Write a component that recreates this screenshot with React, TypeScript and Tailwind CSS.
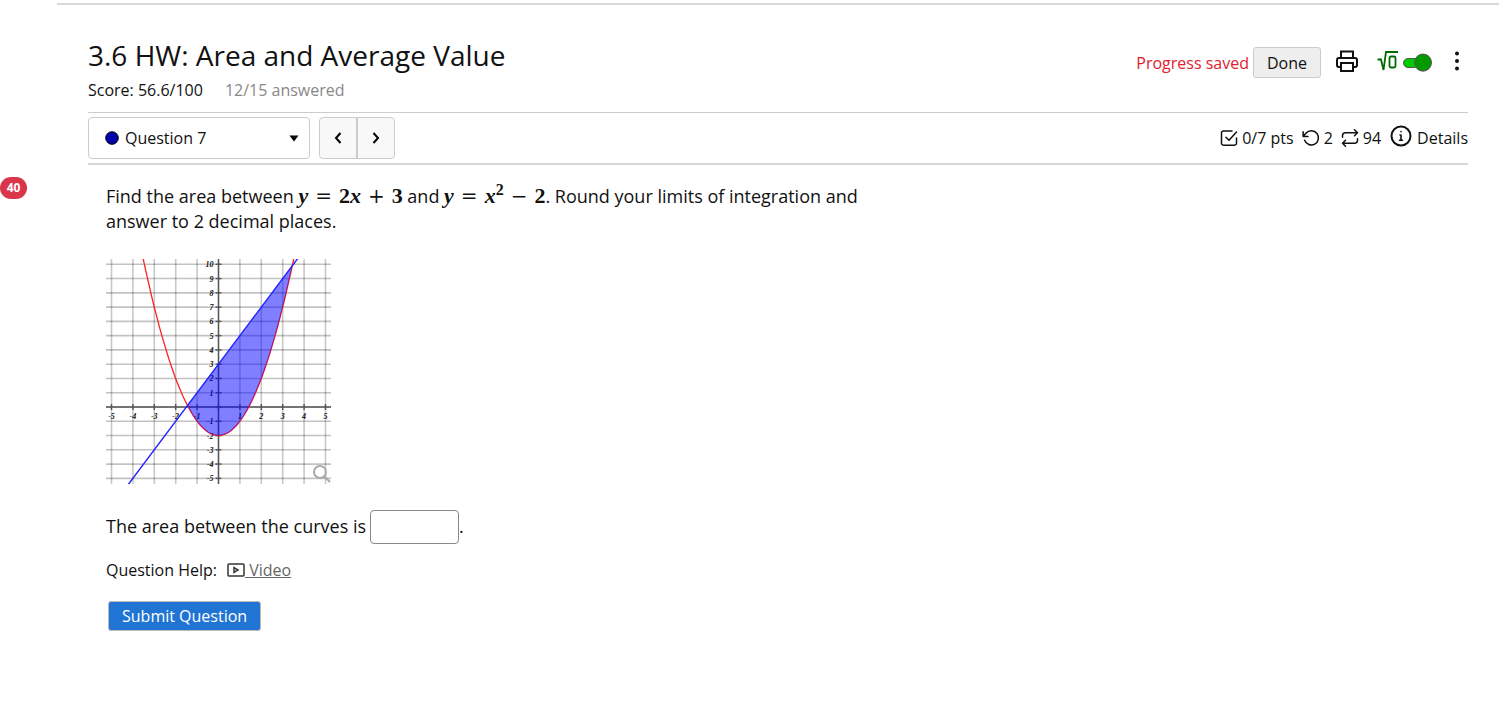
import { useState } from "react";
import type { ReactNode } from "react";

const WIDTH = 225;
const ORIGIN_X = 112.5;
const ORIGIN_Y = 148;
const UNIT_X = 21.4;
const UNIT_Y = 14.27;

const toX = (x: number) => ORIGIN_X + x * UNIT_X;
const toY = (y: number) => ORIGIN_Y - y * UNIT_Y;
const parabola = (x: number) => x * x - 2;

const range = (from: number, to: number) =>
  Array.from({ length: to - from + 1 }, (_, i) => from + i);

const curve = (from: number, to: number) => {
  const steps = 60;
  return Array.from({ length: steps + 1 }, (_, i) => {
    const x = from + ((to - from) * i) / steps;
    return `${toX(x).toFixed(1)},${toY(parabola(x)).toFixed(1)}`;
  }).join(" ");
};

// x values where 2x + 3 = x^2 - 2
const LEFT = 1 - Math.sqrt(6);
const RIGHT = 1 + Math.sqrt(6);

const Graph = () => (
  <svg width={WIDTH} height={WIDTH} viewBox="0 0 225 225" role="img" aria-label="Region between a line and a parabola" className="block overflow-hidden">
    {range(-5, 5).map((x) => (
      <line key={`v${x}`} x1={toX(x)} x2={toX(x)} y1="0" y2={WIDTH} stroke="#000" strokeOpacity="0.22" strokeWidth="1.6" />
    ))}
    {range(-5, 10).map((y) => (
      <line key={`h${y}`} x1="0" x2={WIDTH} y1={toY(y)} y2={toY(y)} stroke="#000" strokeOpacity="0.24" strokeWidth="1.6" />
    ))}
    <g stroke="#555" strokeWidth="1.4">
      <line x1="0" x2={WIDTH} y1={ORIGIN_Y} y2={ORIGIN_Y} />
      <line x1={ORIGIN_X} x2={ORIGIN_X} y1="0" y2={WIDTH} />
      {range(-5, 5).map((x) => (
        <line key={x} x1={toX(x)} x2={toX(x)} y1={ORIGIN_Y - 3} y2={ORIGIN_Y + 3} />
      ))}
      {range(-5, 10).map((y) => (
        <line key={y} x1={ORIGIN_X - 3} x2={ORIGIN_X + 3} y1={toY(y)} y2={toY(y)} />
      ))}
    </g>
    <g className="font-['Liberation_Serif',serif] text-[8px] font-bold italic" fill="#111">
      {range(-5, 5).filter((x) => x !== 0).map((x) => (
        <text key={x} x={toX(x)} y={ORIGIN_Y + 12} textAnchor="middle">{x}</text>
      ))}
      {range(-5, 10).filter((y) => y !== 0).map((y) => (
        <text key={y} x={ORIGIN_X - 5} y={toY(y) + 3} textAnchor="end">{y}</text>
      ))}
    </g>
    <polyline points={curve(-3.6, 3.6)} fill="none" stroke="#ff2020" strokeWidth="1.3" />
    <polygon points={curve(LEFT, RIGHT)} fill="#0000ff" fillOpacity="0.5" />
    <line x1={toX(-4.3)} y1={toY(-5.6)} x2={toX(3.8)} y2={toY(10.6)} stroke="#2020ff" strokeWidth="1.4" />
    <g stroke="#aaa" strokeWidth="2" fill="none">
      <circle cx="214" cy="213" r="6" />
      <path d="M218.500 217.500L224 223" />
    </g>
  </svg>
);

const Icon = ({ size, children }: { size: number; children: ReactNode }) => (
  <svg width={size} height={size} viewBox="0 0 24 24" fill="none" stroke="currentColor" strokeWidth="2" strokeLinecap="round" strokeLinejoin="round" aria-hidden="true" className="shrink-0">
    {children}
  </svg>
);

const MathText = ({ children }: { children: ReactNode }) => (
  <span className="whitespace-nowrap font-['Liberation_Serif',serif] text-[22px] leading-none font-bold">{children}</span>
);

const Op = ({ children }: { children: string }) => (
  <span className="mx-[7px] font-['DejaVu_Serif',serif] text-xl leading-none font-normal">{children}</span>
);

const Header = () => {
  const [mathInput, setMathInput] = useState(true);

  return (
    <header className="flex items-start justify-between border-b border-[#ccc] pt-[31px] pb-[10px]">
      <div>
        <h1 className="text-[28px] leading-[38px]">3.6 HW: Area and Average Value</h1>
        <p className="mt-1 flex gap-[22px] text-base leading-6">
          <span>Score: 56.6/100</span>
          <span className="text-[#888]">12/15 answered</span>
        </p>
      </div>
      <div className="mt-[11px] flex items-center">
        <span className="text-base text-[#e02030]">Progress saved</span>
        <button type="button" className="ml-1 h-[31px] rounded-[3px] border border-[#ccc] bg-[#eee] px-[13px] text-base leading-none">Done</button>
        <button type="button" aria-label="Print" className="ml-[14px] -mt-1">
          <Icon size={24}>
            <path strokeLinejoin="miter" d="M6 9V2.500h12V9M6 18H4a2 2 0 0 1-2-2v-5a2 2 0 0 1 2-2h16a2 2 0 0 1 2 2v5a2 2 0 0 1-2 2h-2M6 14h12v8H6z" />
          </Icon>
        </button>
        <label className="ml-[18px] flex items-center gap-1">
          <svg width="22" height="22" viewBox="0 0 22 22" fill="none" stroke="#006b00" strokeWidth="1.8" aria-hidden="true" className="-mt-1">
            <path d="M0.500 9.500h3.500L6.500 20 9 2H21" />
            <rect x="12.500" y="6.500" width="6" height="11" rx="1.500" />
          </svg>
          <input
            type="checkbox"
            role="switch"
            aria-label="Equation editor"
            checked={mathInput}
            onChange={() => setMathInput(!mathInput)}
            className="sr-only"
          />
          <svg width="30" height="20" viewBox="0 0 30 20" aria-hidden="true">
            <rect x="0.500" y="5.500" width="22" height="9" rx="4.500" fill="#00cc00" stroke="#555" />
            <circle cx={mathInput ? 20 : 9} cy="10.500" r="8.500" fill="#bbb" />
            <circle cx={mathInput ? 20 : 9} cy="9.500" r="8.500" fill="#009900" stroke="#555" />
          </svg>
        </label>
        <button type="button" aria-label="More options" className="mr-[3px] ml-4 -mt-1">
          <svg width="16" height="22" viewBox="0 0 16 22" fill="currentColor" aria-hidden="true">
            <circle cx="8" cy="3.500" r="2" />
            <circle cx="8" cy="11" r="2" />
            <circle cx="8" cy="18.500" r="2" />
          </svg>
        </button>
      </div>
    </header>
  );
};

const QuestionBar = () => (
  <div className="flex items-center justify-between border-b-2 border-[#d6d6d6] py-1">
    <div className="flex gap-[9px]">
      <div className="flex h-[42px] w-[222px] items-center rounded-[4px] border border-[#ccc] pr-[10px] pl-4">
        <svg width="14" height="14" viewBox="0 0 14 14" aria-hidden="true" className="shrink-0">
          <circle cx="7" cy="7" r="6.300" fill="#0000a8" stroke="#000" />
        </svg>
        <select aria-label="Question" className="h-full min-w-0 flex-1 appearance-none bg-transparent pl-[6px] text-base">
          <option>Question 7</option>
        </select>
        <svg width="10" height="7" viewBox="0 0 10 7" aria-hidden="true" className="pointer-events-none shrink-0">
          <path d="M0.500 0.500h9L5 6.500z" fill="#000" />
        </svg>
      </div>
      <div className="flex h-[42px] w-[76px] divide-x-2 divide-[#ccc] overflow-hidden rounded-[4px] border border-[#ccc] bg-[#f8f8f8]">
        <button type="button" aria-label="Previous question" className="flex flex-1 items-center justify-center">
          <svg width="8" height="12" viewBox="0 0 8 12" fill="none" stroke="#000" strokeWidth="2" aria-hidden="true">
            <path d="M6.500 1L2 6l4.500 5" />
          </svg>
        </button>
        <button type="button" aria-label="Next question" className="flex flex-1 items-center justify-center">
          <svg width="8" height="12" viewBox="0 0 8 12" fill="none" stroke="#000" strokeWidth="2" aria-hidden="true">
            <path d="M1.500 1L6 6l-4.500 5" />
          </svg>
        </button>
      </div>
    </div>
    <div className="flex items-center gap-2 text-base leading-6">
      <span className="flex items-center gap-1">
        <Icon size={18}>
          <path d="M8 11l4 4L22 4M22 12v7a2.500 2.500 0 0 1-2.500 2.500h-15A2.500 2.500 0 0 1 2 19V5a2.500 2.500 0 0 1 2.500-2.500H16" />
        </Icon>
        0/7 pts
      </span>
      <span className="flex items-center gap-1">
        <Icon size={18}>
          <path d="M1.500 3.500v6.500h6.500M3.500 15a9.500 9.500 0 1 0 2-9.700L1.500 10" />
        </Icon>
        2
      </span>
      <span className="flex items-center gap-1">
        <Icon size={18}>
          <path d="M18 1l4 4-4 4M2 11V9a4 4 0 0 1 4-4h16M6 23l-4-4 4-4M22 13v2a4 4 0 0 1-4 4H2" />
        </Icon>
        94
      </span>
      <button type="button" className="flex items-center gap-1">
        <span className="-mt-1">
          <Icon size={24}>
            <circle cx="12" cy="12" r="9.500" />
            <path strokeWidth="1.6" d="M11 11h1v5M10.500 16.200h3M12 7.500v.2" />
          </Icon>
        </span>
        Details
      </button>
    </div>
  </div>
);

const App = () => {
  return (
    <div className="flex items-start bg-white font-['Open_Sans',sans-serif] text-[#111]">
      <aside className="w-[57px] shrink-0 pt-[177px]">
        <span className="flex h-[22px] w-[27px] items-center justify-center rounded-full bg-[#d9364c] text-xs font-bold text-white">40</span>
      </aside>
      <main className="mt-[3px] mr-[10px] min-w-0 flex-1 border-t-2 border-[#d5d8db] px-[31px] pb-20">
        <Header />
        <QuestionBar />
        <section className="pt-[19px] pl-[18px]">
          <p className="text-lg leading-[25px]">
            Find the area between{" "}
            <MathText><i>y</i><Op>=</Op>2<i>x</i><Op>+</Op>3</MathText> and{" "}
            <MathText><i>y</i><Op>=</Op><i>x</i><sup className="text-[16px] leading-none">2</sup><Op>−</Op>2</MathText>. Round your limits of integration and
            <br />
            answer to 2 decimal places.
          </p>
          <div className="mt-[25px]">
            <Graph />
          </div>
          <div className="mt-[26px] flex items-center text-lg">
            <label htmlFor="area" className="pb-[3px]">The area between the curves is</label>
            <input id="area" type="text" className="ml-1 h-[34px] w-[89px] rounded-[4px] border border-[#888] px-2" />
            <span className="pb-[3px]">.</span>
          </div>
          <p className="mt-[14px] flex items-center text-base leading-6">
            Question Help:
            <a href="#video" className="ml-[10px] flex items-center text-[#666]">
              <svg width="18" height="14" viewBox="0 0 18 14" fill="none" stroke="#333" strokeWidth="1.500" aria-hidden="true">
                <rect x="1" y="1" width="16" height="12" rx="1" />
                <path d="M7 4.500v5L11 7z" />
              </svg>
              <span className="whitespace-pre underline"> Video</span>
            </a>
          </p>
          <button type="submit" className="mt-[19px] ml-[2px] h-[30px] rounded-[3px] border border-[#bbb] bg-[#1f74d4] px-[13px] text-base leading-none text-white">Submit Question</button>
        </section>
      </main>
    </div>
  );
};

export default App;
